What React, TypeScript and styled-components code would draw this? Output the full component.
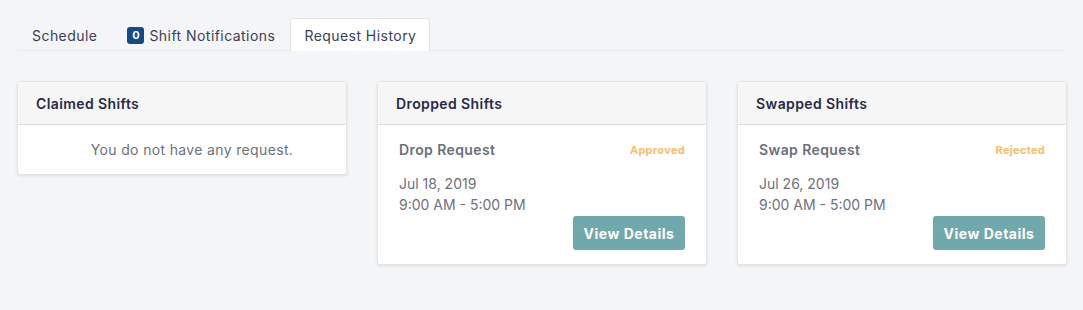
import React from "react";
import styled, { createGlobalStyle } from "styled-components";

const Global = createGlobalStyle`
  html, body { margin: 0; padding: 0; background: #f4f5f7; }
  body { font-family: "Inter", "Noto Sans", "Liberation Sans", sans-serif; color: #2b2d42; letter-spacing: 0.35px; }
  * { box-sizing: border-box; }
`;

const Page = styled.div`
  padding: 18px 17px 0 17px;
  min-height: 310px;
`;

const TabBar = styled.div`
  display: flex;
  align-items: flex-end;
  border-bottom: 1px solid #e9ebee;
  height: 33px;
`;

const Tab = styled.div<{ $active?: boolean }>`
  display: flex;
  align-items: center;
  gap: 5px;
  height: 33px;
  padding: 0 ${(p) => (p.$active ? "13px" : "14px")};
  margin-bottom: -1px;
  font-size: 14px;
  letter-spacing: 0.45px;
  color: #3a3f55;
  background: ${(p) => (p.$active ? "#ffffff" : "transparent")};
  border: 1px solid ${(p) => (p.$active ? "#e3e5e8" : "transparent")};
  border-bottom: none;
  border-radius: 3px 3px 0 0;
`;

const Badge = styled.span`
  display: inline-flex;
  align-items: center;
  justify-content: center;
  width: 17px;
  height: 17px;
  border-radius: 3px;
  background: #144a87;
  color: #fff;
  font-size: 11px;
  font-weight: 700;
  letter-spacing: 0;
`;

const Grid = styled.div`
  display: grid;
  grid-template-columns: repeat(3, 330px);
  column-gap: 30px;
  align-items: start;
  margin-top: 30px;
`;

const Card = styled.div`
  background: #fff;
  border: 1px solid #e2e4e7;
  border-radius: 3px;
  box-shadow: 0 1px 3px rgba(0, 0, 0, 0.1);
  overflow: hidden;
`;

const CardHeader = styled.div`
  height: 43px;
  display: flex;
  align-items: center;
  padding: 0 18px;
  background: #f6f6f7;
  border-bottom: 1px solid #dcdee1;
  font-size: 14px;
  font-weight: 600;
  color: #262a45;
  letter-spacing: 0.4px;
`;

const Empty = styled.div`
  height: 49px;
  display: flex;
  align-items: center;
  justify-content: center;
  padding-left: 20px;
  font-size: 14px;
  color: #6d717c;
`;

const RequestBody = styled.div`
  padding: 16px 21px 14px 21px;
  display: flex;
  flex-direction: column;
`;

const TopRow = styled.div`
  display: flex;
  justify-content: space-between;
  align-items: center;
`;

const ReqTitle = styled.div`
  font-size: 14px;
  font-weight: 600;
  color: #6a6f7a;
  letter-spacing: 0.4px;
`;

const Status = styled.div`
  font-size: 11px;
  font-weight: 700;
  color: #f8bd6b;
  letter-spacing: 0.3px;
`;

const DateLine = styled.div<{ $first?: boolean }>`
  font-size: 14px;
  color: #6d717c;
  line-height: 21px;
  letter-spacing: 0;
  margin-top: ${(p) => (p.$first ? "15px" : "0")};
`;

const Button = styled.button`
  align-self: flex-end;
  margin-top: 1px;
  width: 112px;
  height: 34px;
  border: none;
  border-radius: 3px;
  background: #71a8ab;
  color: #fff;
  font-family: inherit;
  font-size: 14px;
  font-weight: 700;
  letter-spacing: 0.5px;
  padding: 0;
`;

function RequestCard(props: { title: string; req: string; status: string; date: string }) {
  return (
    <Card>
      <CardHeader>{props.title}</CardHeader>
      <RequestBody>
        <TopRow>
          <ReqTitle>{props.req}</ReqTitle>
          <Status>{props.status}</Status>
        </TopRow>
        <DateLine $first>{props.date}</DateLine>
        <DateLine>9:00 AM - 5:00 PM</DateLine>
        <Button>View Details</Button>
      </RequestBody>
    </Card>
  );
}

export default function App() {
  return (
    <>
      <Global />
      <Page>
        <TabBar>
          <Tab>Schedule</Tab>
          <Tab>
            <Badge>0</Badge>Shift Notifications
          </Tab>
          <Tab $active>Request History</Tab>
        </TabBar>
        <Grid>
          <Card>
            <CardHeader>Claimed Shifts</CardHeader>
            <Empty>You do not have any request.</Empty>
          </Card>
          <RequestCard title="Dropped Shifts" req="Drop Request" status="Approved" date="Jul 18, 2019" />
          <RequestCard title="Swapped Shifts" req="Swap Request" status="Rejected" date="Jul 26, 2019" />
        </Grid>
      </Page>
    </>
  );
}
